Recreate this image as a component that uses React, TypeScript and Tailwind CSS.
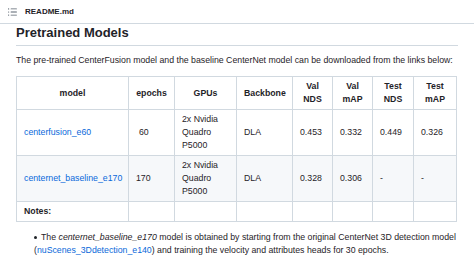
export default function App() {
  const cols = [112, 46, 62, 56, 40, 40, 41, 43];
  const head = [
    ["model"],
    ["epochs"],
    ["GPUs"],
    ["Backbone"],
    ["Val", "NDS"],
    ["Val", "mAP"],
    ["Test", "NDS"],
    ["Test", "mAP"],
  ];
  const rows = [
    { name: "centerfusion_e60", epochs: "60", vals: ["0.453", "0.332", "0.449", "0.326"] },
    { name: "centernet_baseline_e170", epochs: "170", vals: ["0.328", "0.306", "-", "-"] },
  ];
  const cell = "border border-[#d1d9e0] px-[7px] py-[3px] align-middle";

  return (
    <div
      className="min-h-screen w-[474px] bg-white text-[#1f2328] text-[8.75px] leading-[13px]"
      style={{ fontFamily: '"Liberation Sans", Arial, sans-serif' }}
    >
      {/* file header */}
      <div className="h-[24px] flex items-center gap-[8px] pl-[8px] border-b border-[#d1d9e0] bg-white">
        <svg width="9" height="8" viewBox="0 0 16 14" fill="#59636e">
          <rect x="0" y="0.5" width="2.2" height="2.2" rx="1.1" />
          <rect x="0" y="5.9" width="2.2" height="2.2" rx="1.1" />
          <rect x="0" y="11.3" width="2.2" height="2.2" rx="1.1" />
          <rect x="4.5" y="0.9" width="11.5" height="1.4" rx="0.7" />
          <rect x="4.5" y="6.3" width="11.5" height="1.4" rx="0.7" />
          <rect x="4.5" y="11.7" width="11.5" height="1.4" rx="0.7" />
        </svg>
        <span className="font-bold text-[8px] leading-none">README.md</span>
      </div>

      <div className="px-[16px]">
        <h2 className="mt-[1px] pb-[4px] border-b border-[#d1d9e0] text-[13px] leading-[16px] font-bold">
          Pretrained Models
        </h2>

        <p className="mt-[8px] mb-[9px]">
          The pre-trained CenterFusion model and the baseline CenterNet model can be downloaded from the links below:
        </p>

        <table className="table-fixed border-collapse w-[441px]">
          <colgroup>
            {cols.map((w, i) => (
              <col key={i} style={{ width: w }} />
            ))}
          </colgroup>
          <thead>
            <tr className="bg-white">
              {head.map((h, i) => (
                <th key={i} className={`${cell} font-bold text-center`}>
                  {h.map((l, j) => (
                    <div key={j}>{l}</div>
                  ))}
                </th>
              ))}
            </tr>
          </thead>
          <tbody>
            {rows.map((r, i) => (
              <tr key={r.name} className={i === 1 ? "bg-[#f6f8fa]" : "bg-white"}>
                <td className={cell}>
                  <a className="text-[#0969da]">{r.name}</a>
                </td>
                <td className={cell}>
                  <span className={i === 0 ? "pl-[3px]" : ""}>{r.epochs}</span>
                </td>
                <td className={cell}>
                  <div>2x Nvidia</div>
                  <div>Quadro</div>
                  <div>P5000</div>
                </td>
                <td className={cell}>DLA</td>
                {r.vals.map((v, j) => (
                  <td key={j} className={cell}>
                    {v}
                  </td>
                ))}
              </tr>
            ))}
            <tr className="bg-white">
              <td className={`${cell} font-bold`}>Notes:</td>
              {cols.slice(1).map((_, i) => (
                <td key={i} className={cell}></td>
              ))}
            </tr>
          </tbody>
        </table>

        <ul className="mt-[9px] pl-[18px]">
          <li>
            <span className="inline-block w-[3px] h-[3px] rounded-full bg-[#1f2328] align-middle mr-[4px]" />
            The <em>centernet_baseline_e170</em> model is obtained by starting from the original CenterNet 3D detection model{" "}
            <span className="whitespace-nowrap">
              (<a className="text-[#0969da]">nuScenes_3Ddetection_e140</a>)
            </span>{" "}
            and training the velocity and attributes heads for 30 epochs.
          </li>
        </ul>
      </div>
    </div>
  );
}
